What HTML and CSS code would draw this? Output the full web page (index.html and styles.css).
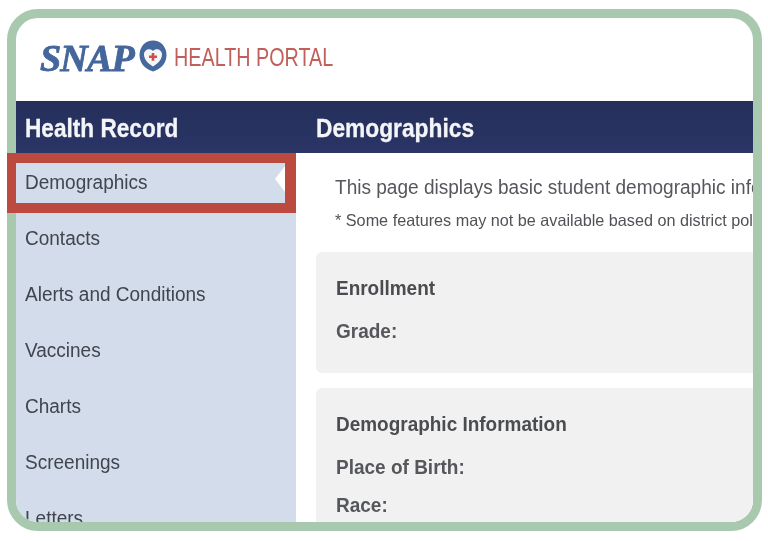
FILE: index.html
```html
<!DOCTYPE html>
<html lang="en">
<head>
<meta charset="utf-8">
<title>SNAP Health Portal</title>
<link rel="stylesheet" href="styles.css">
</head>
<body>
<div class="stage">
  <div class="frame">
    <header class="brand">
      <span class="snap">SNAP</span>
      <svg class="emblem" viewBox="0 0 28 32" width="28" height="32" aria-hidden="true">
        <path d="M14 31.500 C5 29 0.500 22 0.500 15 C0.500 6.500 6.500 0.500 14 0.500 C21.500 0.500 27.500 6.500 27.500 15 C27.500 22 23 29 14 31.500 Z" fill="#45699c"/>
        <path d="M14 26.500 C9 23.500 5 19.500 5 14.500 C5 9.500 11 7.500 14 11 C17 7.500 23 9.500 23 14.500 C23 19.500 19 23.500 14 26.500 Z" fill="#f5f6f8"/>
        <path d="M12.700 13 H15.300 V15.500 H18 V18 H15.300 V20.700 H12.700 V18 H10 V15.500 H12.700 Z" fill="#cf4f45"/>
      </svg>
      <span class="portal">HEALTH PORTAL</span>
    </header>
    <div class="titles">
      <h1 class="title-side">Health Record</h1>
      <h1 class="title-main">Demographics</h1>
    </div>
    <div class="body-row">
      <nav class="side">
        <a class="item">Demographics</a>
        <a class="item">Contacts</a>
        <a class="item">Alerts and Conditions</a>
        <a class="item">Vaccines</a>
        <a class="item">Charts</a>
        <a class="item">Screenings</a>
        <a class="item">Letters</a>
      </nav>
      <main class="main">
        <p class="intro">This page displays basic student demographic information.</p>
        <p class="note">* Some features may not be available based on district policy.</p>
        <section class="card card-enroll">
          <h2 class="card-title">Enrollment</h2>
          <div class="field">Grade:</div>
        </section>
        <section class="card">
          <h2 class="card-title">Demographic Information</h2>
          <div class="field">Place of Birth:</div>
          <div class="field field-tight">Race:</div>
        </section>
      </main>
    </div>
  </div>
  <div class="highlight"><span class="notch"></span></div>
</div>
</body>
</html>
```
FILE: styles.css
```css
html, body {
  margin: 0;
  padding: 0;
  background: #fff;
}
body {
  width: 768px;
  height: 541px;
  overflow: hidden;
  font-family: "Liberation Sans", Arial, sans-serif;
  color: #4b4d52;
}
.stage {
  position: relative;
  width: 768px;
  height: 541px;
  padding: 9px 6px 10px 7px;
  box-sizing: border-box;
  filter: blur(0.35px);
}
.frame {
  height: 100%;
  box-sizing: border-box;
  border: 9px solid #a9c9ae;
  border-radius: 31px;
  overflow: hidden;
  background: #fff;
  display: flex;
  flex-direction: column;
}
.brand {
  height: 83px;
  flex: none;
  display: flex;
  align-items: center;
  padding: 0 0 4px 24px;
  box-sizing: border-box;
}
.snap {
  font-family: "Liberation Serif", serif;
  font-style: italic;
  font-weight: 700;
  font-size: 38px;
  letter-spacing: -0.8px;
  color: #44669c;
  -webkit-text-stroke: 0.9px #44669c;
}
.emblem {
  margin: 0 0 4px 5px;
  flex: none;
}
.portal {
  margin-left: 7px;
  font-size: 26px;
  color: #c1605a;
  transform: scaleX(0.76);
  transform-origin: left center;
  white-space: nowrap;
}
.titles {
  height: 52px;
  flex: none;
  display: flex;
  align-items: center;
  padding-top: 3px;
  box-sizing: border-box;
  background: linear-gradient(#252f5b, #2b3566);
  color: #f4f5f8;
}
.titles h1 {
  margin: 0;
  font-size: 25px;
  font-weight: 700;
  -webkit-text-stroke: 0.3px #f4f5f8;
}
.title-side {
  flex: 0 0 280px;
  padding-left: 9px;
  box-sizing: border-box;
  transform: scaleX(0.905);
  transform-origin: 9px center;
}
.title-main {
  padding-left: 20px;
  transform: scaleX(0.91);
  transform-origin: 20px center;
}
.body-row {
  flex: 1;
  min-height: 0;
  display: flex;
}
.side {
  width: 280px;
  flex: none;
  background: #d2dcea;
  padding-top: 1px;
  box-sizing: border-box;
}
.item {
  display: flex;
  align-items: center;
  height: 56px;
  padding-left: 9px;
  font-size: 20px;
  color: #41454d;
  transform: scaleX(0.95);
  transform-origin: 9px center;
}
.main {
  flex: 1;
  min-width: 0;
  overflow: hidden;
  padding: 20px 0 0 20px;
  background: #fff;
}
.intro {
  margin: 0 0 0 19px;
  font-size: 20px;
  line-height: 28px;
  white-space: nowrap;
  color: #55575c;
  transform: scaleX(0.952);
  transform-origin: left center;
}
.note {
  margin: 9px 0 0 19px;
  font-size: 16.500px;
  line-height: 20px;
  white-space: nowrap;
  color: #505257;
  transform: scaleX(0.982);
  transform-origin: left center;
}
.card {
  width: 700px;
  margin-bottom: 15px;
  padding: 21px 20px 0;
  box-sizing: border-box;
  background: #f1f1f1;
  border-radius: 6px;
}
.card-enroll {
  height: 121px;
  margin-top: 22px;
}
.card:last-child {
  height: 160px;
  margin-bottom: 0;
}
.card-title {
  margin: 0;
  font-size: 20.500px;
  line-height: 30px;
  font-weight: 700;
  color: #4a4c50;
  transform: scaleX(0.925);
  transform-origin: left center;
}
.field {
  margin-top: 16px;
  font-size: 20px;
  line-height: 24px;
  font-weight: 700;
  color: #55575b;
  transform: scaleX(0.95);
  transform-origin: left center;
}
.field-tight {
  margin-top: 14px;
}
.highlight {
  position: absolute;
  left: 7px;
  top: 153px;
  width: 289px;
  height: 60px;
  box-sizing: border-box;
  border-style: solid;
  border-color: #bd4a3f;
  border-width: 10px 11px 10px 9px;
}
.notch {
  position: absolute;
  right: 0;
  top: 3px;
  border-style: solid;
  border-color: transparent #fff transparent transparent;
  border-width: 13px 10px 13px 0;
}
```
